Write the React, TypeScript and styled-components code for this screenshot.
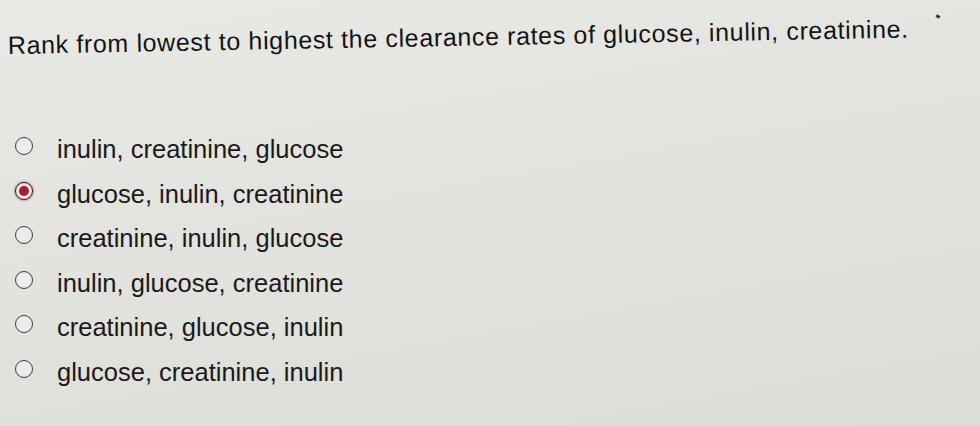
import React from "react";
import styled, { createGlobalStyle } from "styled-components";

const Global = createGlobalStyle`
  html, body { margin: 0; padding: 0; }
  body {
    width: 980px;
    height: 426px;
    overflow: hidden;
    background: linear-gradient(170deg, #e9e9e6 0%, #e3e3e0 40%, #dcdcd8 100%);
    font-family: "Liberation Sans", Arial, Helvetica, sans-serif;
    color: #1c1c1c;
  }
`;

const Page = styled.div`
  position: relative;
  width: 980px;
  height: 426px;
  padding: 30px 0 0 8px;
  box-sizing: border-box;
`;

const Question = styled.div`
  font-size: 25px;
  line-height: 30px;
  letter-spacing: 0.64px;
  color: #141414;
  white-space: nowrap;
  transform: rotate(-1.05deg);
  transform-origin: 0 24px;
`;

const Options = styled.div`
  display: flex;
  flex-direction: column;
  margin-top: 64px;
  padding-left: 7px;
`;

const Row = styled.label`
  display: flex;
  align-items: center;
  height: 44.5px;
  gap: 24px;
`;

const Radio = styled.span<{ $checked?: boolean }>`
  width: 18px;
  height: 18px;
  flex: none;
  box-sizing: border-box;
  border-radius: 50%;
  border: 1.5px solid ${(p) => (p.$checked ? "#2a1416" : "#3a3a3a")};
  background: ${(p) => (p.$checked ? "#f4e6e6" : "#ececea")};
  display: flex;
  align-items: center;
  justify-content: center;
  box-shadow: ${(p) => (p.$checked ? "0 0 0 1.5px rgba(214,120,130,0.45)" : "none")};
  &::after {
    content: "";
    display: ${(p) => (p.$checked ? "block" : "none")};
    width: 10px;
    height: 10px;
    border-radius: 50%;
    background: #a81e2c;
  }
`;

const OptionText = styled.span`
  font-size: 25.5px;
  line-height: 26px;
  color: #1a1a1a;
  white-space: nowrap;
  margin-top: 6px;
`;

const Mark = styled.span`
  position: absolute;
  left: 936px;
  top: 15px;
  width: 4px;
  height: 3px;
  background: #333;
  transform: rotate(30deg);
`;

const options = [
  "inulin, creatinine, glucose",
  "glucose, inulin, creatinine",
  "creatinine, inulin, glucose",
  "inulin, glucose, creatinine",
  "creatinine, glucose, inulin",
  "glucose, creatinine, inulin",
];

export default function App() {
  return (
    <>
      <Global />
      <Page>
        <Mark />
        <Question>
          Rank from lowest to highest the clearance rates of glucose, inulin, creatinine.
        </Question>
        <Options>
          {options.map((o, i) => (
            <Row key={o}>
              <Radio $checked={i === 1} />
              <OptionText>{o}</OptionText>
            </Row>
          ))}
        </Options>
      </Page>
    </>
  );
}
